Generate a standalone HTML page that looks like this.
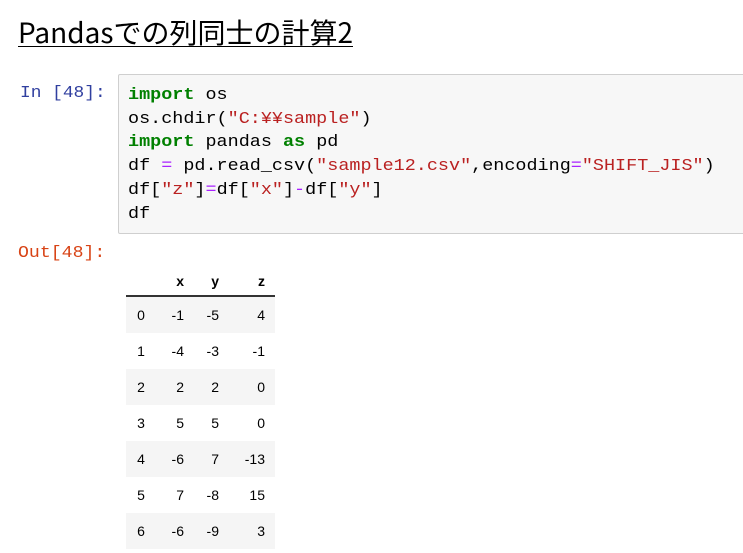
<!DOCTYPE html>
<html><head><meta charset="utf-8"><style>
body{margin:0;width:743px;height:553px;background:#fff;position:relative;overflow:hidden;font-family:"Liberation Sans","Noto Sans CJK JP",sans-serif}
.t{position:absolute;left:18px;top:12px;font-size:28px;text-decoration:underline;text-decoration-thickness:1px;text-underline-offset:3px;color:#000;font-family:"Noto Sans CJK JP",sans-serif}
.mono{font-family:"Liberation Mono","DejaVu Sans Mono",monospace;font-size:17px;transform:scaleX(1.085);transform-origin:left}
.in{position:absolute;left:20px;top:84px;color:#303f9f;transform:scaleX(1.05)}
.out{position:absolute;left:18px;top:244px;color:#d84315;transform:scaleX(1.07)}
.box{position:absolute;left:118px;top:74px;width:640px;height:158px;background:#f7f7f7;border:1px solid #cfcfcf;border-radius:2px}
.code{position:absolute;left:128px;top:84px;line-height:23.7px;color:#000;white-space:pre}
.k{color:#008000;font-weight:bold}.s{color:#ba2121}.o{color:#aa22ff}
table{position:absolute;left:126px;top:266px;border-collapse:collapse;font-size:14px;color:#000}
td,th{height:36px;padding:0;text-align:right}
th{height:29px;font-weight:bold;border-bottom:2px solid #333}
tbody tr:nth-child(odd){background:#f5f5f5}
.c0{width:30px;text-align:center}.c1{width:28px}.c2{width:35px}.c3{width:46px;padding-right:10px}
</style></head><body>
<div class="t">Pandasでの列同士の計算2</div>
<div class="in mono">In [48]:</div>
<div class="box"></div>
<div class="code mono"><span class="k">import</span> os
os.chdir(<span class="s">"C:¥¥sample"</span>)
<span class="k">import</span> pandas <span class="k">as</span> pd
df <span class="o">=</span> pd.read_csv(<span class="s">"sample12.csv"</span>,encoding<span class="o">=</span><span class="s">"SHIFT_JIS"</span>)
df[<span class="s">"z"</span>]<span class="o">=</span>df[<span class="s">"x"</span>]<span class="o">-</span>df[<span class="s">"y"</span>]
df</div>
<div class="out mono">Out[48]:</div>
<table>
<thead><tr><th class="c0"></th><th class="c1">x</th><th class="c2">y</th><th class="c3">z</th></tr></thead>
<tbody>
<tr><td class="c0">0</td><td class="c1">-1</td><td class="c2">-5</td><td class="c3">4</td></tr>
<tr><td class="c0">1</td><td class="c1">-4</td><td class="c2">-3</td><td class="c3">-1</td></tr>
<tr><td class="c0">2</td><td class="c1">2</td><td class="c2">2</td><td class="c3">0</td></tr>
<tr><td class="c0">3</td><td class="c1">5</td><td class="c2">5</td><td class="c3">0</td></tr>
<tr><td class="c0">4</td><td class="c1">-6</td><td class="c2">7</td><td class="c3">-13</td></tr>
<tr><td class="c0">5</td><td class="c1">7</td><td class="c2">-8</td><td class="c3">15</td></tr>
<tr><td class="c0">6</td><td class="c1">-6</td><td class="c2">-9</td><td class="c3">3</td></tr>
</tbody></table>
</body></html>
